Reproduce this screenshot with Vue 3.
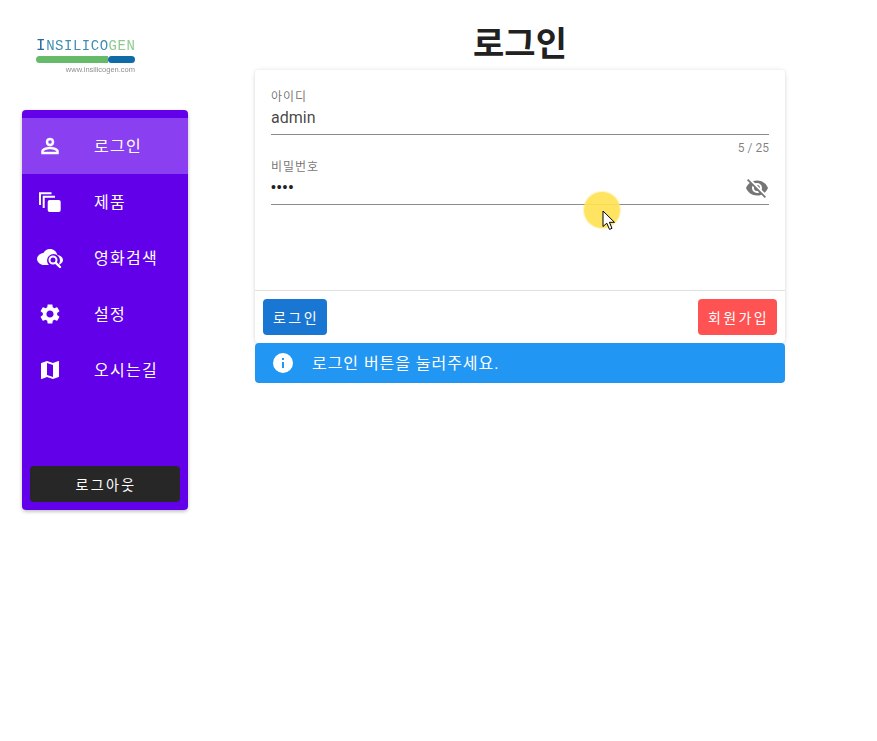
<script setup>
const items = [
  { key: 'login', label: '로그인', active: true },
  { key: 'product', label: '제품' },
  { key: 'search', label: '영화검색' },
  { key: 'settings', label: '설정' },
  { key: 'map', label: '오시는길' }
]
</script>

<template>
  <div class="page">
    <aside class="side">
      <div class="logo">
        <div class="logo-name"><span class="cap">I</span>NSILICO<span class="green">GEN</span></div>
        <div class="logo-bar"><span class="bar-green"></span><span class="bar-blue"></span></div>
        <div class="logo-url">www.insilicogen.com</div>
      </div>
      <nav class="nav">
        <div class="items">
          <a v-for="it in items" :key="it.key" class="item" :class="{ active: it.active }">
            <span class="ico">
              <svg v-if="it.key === 'login'" viewBox="0 0 24 24" width="24" height="24"><path fill="#fff" stroke="#fff" stroke-width=".5" d="M12,4A4,4 0 0,1 16,8A4,4 0 0,1 12,12A4,4 0 0,1 8,8A4,4 0 0,1 12,4M12,6A2,2 0 0,0 10,8A2,2 0 0,0 12,10A2,2 0 0,0 14,8A2,2 0 0,0 12,6M12,13C14.670,13 20.500,14.330 20.500,17V20H3.500V17C3.500,14.330 9.330,13 12,13M12,14.900C9.030,14.900 5.600,16.360 5.600,17V18.100H18.400V17C18.400,16.360 14.970,14.900 12,14.900Z"/></svg>
              <svg v-else-if="it.key === 'product'" viewBox="0 0 24 24" width="24" height="24"><path fill="#fff" d="M1 2.300h12.500v2H3V15H1zM4.700 5.700H17v2H6.700V18h-2z"/><rect x="9.700" y="10" width="13" height="12" rx="2" fill="#fff"/></svg>
              <svg v-else-if="it.key === 'search'" viewBox="0 0 24 24" width="24" height="24" class="cloud"><path fill="#fff" d="M12 3C9.100 3 6.600 4.600 5.350 7.040 2.340 7.360-1 9.910-1 13c0 3.310 3.690 6 7 6h13c2.760 0 6-2.240 6-5 0-2.640-3.050-4.780-5.650-4.960C18.670 5.590 15.640 3 12 3z"/><circle cx="15.500" cy="14.500" r="6.500" fill="#6200ea"/><circle cx="15" cy="14" r="3.500" fill="none" stroke="#fff" stroke-width="2"/><path d="M17.800 16.800l4.200 4.200" stroke="#fff" stroke-width="2.400" stroke-linecap="round"/></svg>
              <svg v-else-if="it.key === 'settings'" viewBox="0 0 24 24" width="24" height="24"><path fill="#fff" d="M19.140 12.940c.04-.3.06-.61.06-.94 0-.32-.02-.64-.07-.94l2.030-1.580c.18-.14.23-.41.12-.61l-1.920-3.320c-.12-.22-.37-.29-.59-.22l-2.390.96c-.5-.38-1.030-.7-1.620-.94l-.36-2.540c-.04-.24-.24-.41-.48-.41h-3.840c-.24 0-.43.17-.47.41l-.36 2.540c-.59.24-1.130.57-1.620.94l-2.390-.96c-.22-.08-.47 0-.59.22L2.740 8.870c-.12.21-.08.47.12.61l2.030 1.580c-.05.3-.09.63-.09.94s.02.64.07.94l-2.030 1.580c-.18.14-.23.41-.12.61l1.920 3.320c.12.22.37.29.59.22l2.390-.96c.5.38 1.030.7 1.620.94l.36 2.540c.05.24.24.41.48.41h3.840c.24 0 .44-.17.47-.41l.36-2.540c.59-.24 1.130-.56 1.620-.94l2.390.96c.22.08.47 0 .59-.22l1.920-3.320c.12-.22.07-.47-.12-.61l-2.010-1.580zM12 15.600c-1.980 0-3.600-1.620-3.600-3.600s1.620-3.600 3.600-3.600 3.600 1.620 3.600 3.600-1.620 3.600-3.600 3.600z"/></svg>
              <svg v-else viewBox="0 0 24 24" width="24" height="24"><path fill="#fff" d="M15,19L9,16.890V5L15,7.110M20.500,3C20.440,3 20.390,3 20.340,3L15,5.100L9,3L3.360,4.900C3.150,4.970 3,5.150 3,5.380V20.500A0.500,0.500 0 0,0 3.500,21C3.550,21 3.610,21 3.660,20.970L9,18.900L15,21L20.640,19.100C20.850,19 21,18.850 21,18.620V3.500A0.500,0.500 0 0,0 20.500,3Z"/></svg>
            </span>
            <span class="item-label">{{ it.label }}</span>
          </a>
        </div>
        <div class="logout-wrap">
          <button class="btn logout">로그아웃</button>
        </div>
      </nav>
    </aside>

    <main class="main">
      <h1 class="title">로그인</h1>
      <section class="card">
        <div class="form">
          <div class="field">
            <label class="label">아이디</label>
            <div class="value">admin</div>
          </div>
          <div class="counter">5 / 25</div>
          <div class="field">
            <label class="label">비밀번호</label>
            <div class="value pw">
              <span class="dots">••••</span>
              <svg class="eye" viewBox="0 0 24 24" width="24" height="24"><path fill="#757575" d="M11.830,9L15,12.160C15,12.110 15,12.050 15,12A3,3 0 0,0 12,9C11.940,9 11.890,9 11.830,9M7.530,9.800L9.080,11.350C9.030,11.560 9,11.770 9,12A3,3 0 0,0 12,15C12.220,15 12.440,14.970 12.650,14.920L14.200,16.470C13.530,16.800 12.790,17 12,17A5,5 0 0,1 7,12C7,11.210 7.200,10.470 7.530,9.800M2,4.270L4.280,6.550L4.730,7C3.080,8.300 1.780,10 1,12C2.730,16.390 7,19.500 12,19.500C13.550,19.500 15.030,19.200 16.380,18.660L16.810,19.080L19.730,22L21,20.730L3.270,3M12,7A5,5 0 0,1 17,12C17,12.640 16.870,13.260 16.640,13.820L19.570,16.750C21.070,15.500 22.270,13.860 23,12C21.270,7.610 17,4.500 12,4.500C10.600,4.500 9.260,4.750 8,5.200L10.170,7.350C10.740,7.130 11.350,7 12,7Z"/></svg>
            </div>
          </div>
        </div>
        <div class="actions">
          <button class="btn primary">로그인</button>
          <button class="btn danger">회원가입</button>
        </div>
      </section>
      <div class="alert">
        <svg class="info" viewBox="0 0 24 24" width="24" height="24"><path fill="#fff" d="M13,9H11V7H13M13,17H11V11H13M12,2A10,10 0 0,0 2,12A10,10 0 0,0 12,22A10,10 0 0,0 22,12A10,10 0 0,0 12,2Z"/></svg>
        <span class="alert-text">로그인 버튼을 눌러주세요.</span>
      </div>
    </main>

    <div class="pointer">
      <span class="halo"></span>
      <svg class="arrow" viewBox="0 0 14 22" width="14" height="22"><path d="M1 1v15.500l3.800-3.300 2.700 6.200 2.500-1.100-2.600-6H12.500z" fill="#fff" stroke="#000" stroke-width="1"/></svg>
    </div>
  </div>
</template>

<style>
html, body { margin: 0; background: #fff; }
</style>

<style scoped>
.page {
  position: relative;
  display: flex;
  width: 877px;
  height: 741px;
  overflow: hidden;
  background: #fff;
  font-family: Roboto, "Noto Sans CJK KR", sans-serif;
  color: rgba(0, 0, 0, .87);
}
.side {
  width: 166px;
  margin-left: 22px;
  flex: none;
}
.logo {
  height: 110px;
  box-sizing: border-box;
  padding: 38px 0 0 14px;
}
.logo-name {
  width: 102px;
  height: 16px;
  font-family: "Liberation Mono", monospace;
  font-size: 14px;
  line-height: 16px;
  letter-spacing: .52px;
  color: #3d8db5;
  white-space: nowrap;
  filter: blur(.3px);
}
.cap { font-size: 16px; color: #2a6a98; }
.green { color: #8fcb8f; }
.logo-bar {
  display: flex;
  width: 99px;
  height: 7px;
  margin-top: 2px;
  filter: blur(.3px);
}
.bar-green {
  width: 72px;
  background: #66bb6a;
  border-radius: 4px 0 0 4px;
}
.bar-blue {
  flex: 1;
  background: #0f6aa8;
  border-radius: 4px;
}
.logo-url {
  width: 99px;
  margin-top: 2px;
  font-family: "Liberation Sans", sans-serif;
  font-size: 7.500px;
  line-height: 9px;
  text-align: right;
  color: #8f8f8f;
  filter: blur(.2px);
}
.nav {
  display: flex;
  flex-direction: column;
  height: 400px;
  border-radius: 4px;
  background: #6200ea;
  box-shadow: 0 2px 4px -1px rgba(0,0,0,.2), 0 1px 4px rgba(0,0,0,.14);
}
.items {
  flex: 1;
  padding-top: 8px;
}
.item {
  display: flex;
  align-items: center;
  height: 56px;
  padding-left: 16px;
  color: #fff;
  font-size: 16px;
}
.item.active { background: #8a40f0; }
.ico {
  display: flex;
  width: 24px;
  height: 24px;
  margin-right: 32px;
}
.cloud { overflow: visible; }
.item-label {
  padding-bottom: 2px;
  letter-spacing: 1.300px;
}
.logout-wrap { padding: 8px; }
.btn {
  display: flex;
  align-items: center;
  justify-content: center;
  height: 36px;
  padding: 0 0 0 2px;
  box-sizing: border-box;
  border: 0;
  border-radius: 4px;
  color: #fff;
  font-family: inherit;
  font-size: 14px;
  font-weight: 400;
  letter-spacing: 2.400px;
}
.logout { width: 150px; background: #272727; }
.main {
  width: 530px;
  margin-left: 67px;
  flex: none;
}
.title {
  height: 70px;
  margin: 0;
  font-size: 34px;
  line-height: 88px;
  font-weight: 700;
  text-align: center;
  color: #212121;
}
.card {
  height: 273px;
  border-radius: 4px;
  background: #fff;
  box-shadow: 0 2px 4px -1px rgba(0,0,0,.12), 0 0 5px rgba(0,0,0,.1);
  display: flex;
  flex-direction: column;
}
.form {
  flex: 1;
  padding: 16px 16px 0;
  border-bottom: 1px solid #e0e0e0;
}
.field {
  border-bottom: 1px solid #8c8c8c;
}
.label {
  display: block;
  height: 20px;
  font-size: 12px;
  line-height: 22px;
  letter-spacing: 1px;
  color: rgba(0, 0, 0, .58);
}
.value {
  height: 28px;
  font-size: 16px;
  line-height: 24px;
  color: rgba(0, 0, 0, .74);
}
.pw {
  display: flex;
  justify-content: space-between;
}
.dots {
  font-family: "Liberation Sans", sans-serif;
  font-size: 14px;
  line-height: 23px;
  letter-spacing: .9px;
  color: #212121;
}
.counter {
  height: 21px;
  padding-top: 6px;
  box-sizing: border-box;
  font-size: 12px;
  line-height: 15px;
  text-align: right;
  color: rgba(0, 0, 0, .5);
}
.actions {
  display: flex;
  justify-content: space-between;
  height: 52px;
  box-sizing: border-box;
  padding: 8px;
}
.primary { width: 64px; background: #1976d2; }
.danger { width: 79px; background: #ff5252; }
.alert {
  display: flex;
  align-items: center;
  height: 40px;
  box-sizing: border-box;
  padding-left: 16px;
  border-radius: 4px;
  background: #2196f3;
  color: #fff;
  font-size: 16px;
}
.info { margin-right: 17px; }
.alert-text {
  padding-bottom: 2px;
  letter-spacing: .95px;
}
.pointer {
  position: absolute;
  left: 602px;
  top: 210px;
  width: 0;
  height: 0;
}
.halo {
  position: absolute;
  left: -18px;
  top: -18px;
  width: 36px;
  height: 36px;
  border-radius: 50%;
  background: rgba(255, 226, 85, .93);
  box-shadow: 0 0 1px 1px rgba(255, 235, 120, .5);
}
.arrow {
  position: absolute;
  left: 0;
  top: 0;
}
</style>
